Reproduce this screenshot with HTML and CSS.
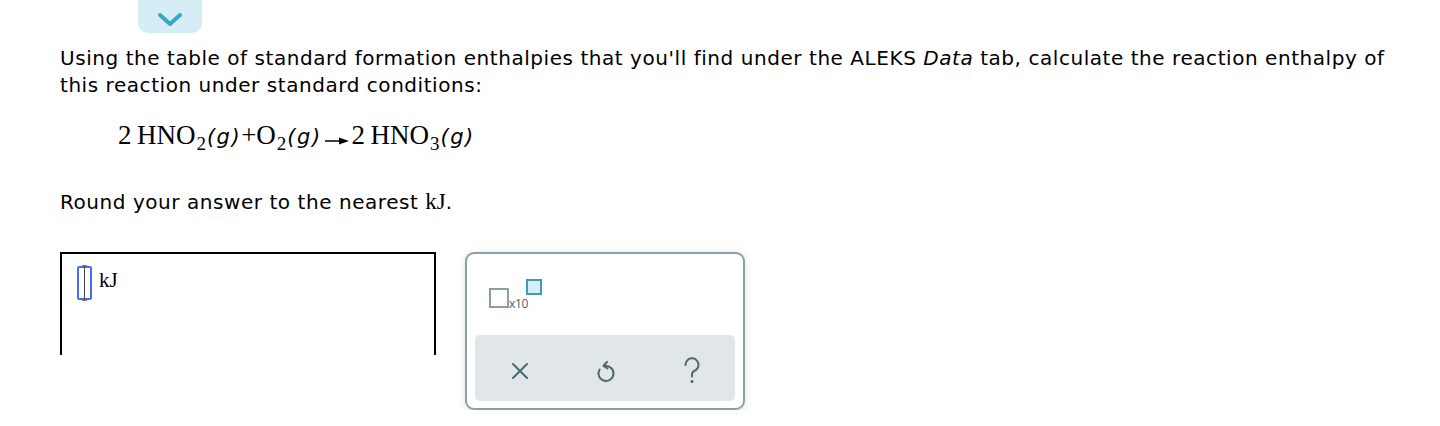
FILE: index.html
```html
<!DOCTYPE html>
<html>
<head>
<meta charset="utf-8">
<link rel="stylesheet" href="styles.css">
</head>
<body>
<div class="tabrow">
  <div class="tab">
    <svg width="26" height="16" viewBox="0 0 26 16"><path d="M3 3 L13 12 L23 3" fill="none" stroke="#3ba6c6" stroke-width="4" stroke-linecap="round" stroke-linejoin="round"/></svg>
  </div>
</div>
<div class="question">
  <p class="prompt">Using the table of standard formation enthalpies that you'll find under the ALEKS <i>Data</i> tab, calculate the reaction enthalpy of this reaction under standard conditions:</p>
  <div class="eq">
    <span class="tm">2&#8201;HNO</span><span class="sb">2</span><span class="ph">(g)</span><span class="tm">+O</span><span class="sb">2</span><span class="ph">(g)</span><svg class="arrow" width="26" height="10" viewBox="0 0 26 10"><path d="M1 5 H18" stroke="#000" stroke-width="1.5"/><path d="M15 1.5 L25 5 L15 8.5 Z" fill="#000"/></svg><span class="tm">2&#8201;HNO</span><span class="sb">3</span><span class="ph">(g)</span>
  </div>
  <p class="round">Round your answer to the nearest <span class="tm2">kJ</span>.</p>
  <div class="work">
    <div class="answer">
      <div class="line">
        <span class="cursor"><span class="bar"></span></span>
        <span class="unit">kJ</span>
      </div>
    </div>
    <div class="tools">
      <div class="palette">
        <span class="sci">
          <span class="base"></span><span class="x10">x10</span><span class="exp"></span>
        </span>
      </div>
      <div class="actions">
        <svg width="18" height="18" viewBox="0 0 18 18"><path d="M2 2 L16 16 M16 2 L2 16" stroke="#4c6873" stroke-width="2" stroke-linecap="round"/></svg>
        <svg width="20" height="24" viewBox="0 0 20 24"><path d="M9 7 A7.5 7.5 0 1 1 3.6 10.5" fill="none" stroke="#4c6873" stroke-width="2" stroke-linecap="round"/><path d="M11 3 L7.5 6.8 L11.5 9.5" fill="none" stroke="#4c6873" stroke-width="2" stroke-linecap="round" stroke-linejoin="round"/></svg>
        <svg width="18" height="28" viewBox="0 0 18 28"><path d="M2.5 8 A6.5 6.5 0 1 1 11 14 Q9 15 9 18 V19.5" fill="none" stroke="#4c6873" stroke-width="2" stroke-linecap="round"/><circle cx="9" cy="24.5" r="1.5" fill="#4c6873"/></svg>
      </div>
    </div>
  </div>
</div>
</body>
</html>
```
FILE: styles.css
```css
html, body {
  margin: 0;
  padding: 0;
  background: #fff;
}
body {
  font-family: "DejaVu Sans", Verdana, sans-serif;
  color: #000;
}
.tabrow {
  padding-left: 138px;
  height: 33px;
}
.tab {
  width: 64px;
  height: 33px;
  background: #d5eef6;
  border-radius: 0 0 10px 10px;
  display: flex;
  align-items: center;
  justify-content: center;
  padding-top: 6px;
  box-sizing: border-box;
}
.question {
  padding: 0 40px 0 60px;
}
.prompt {
  margin: 12px 0 0 0;
  font-size: 20px;
  letter-spacing: 0.55px;
  line-height: 27px;
}
.eq {
  margin: 21px 0 0 58px;
  height: 36px;
  display: flex;
  align-items: baseline;
  font-size: 27px;
}
.tm {
  font-family: "Liberation Serif", "Times New Roman", serif;
}
.sb {
  font-family: "Liberation Serif", serif;
  font-size: 19px;
  position: relative;
  top: 6px;
  margin: 0 1px 0 1px;
}
.ph {
  font-family: "DejaVu Sans", sans-serif;
  font-style: italic;
  font-size: 21px;
  letter-spacing: 1.5px;
}
.arrow {
  margin: 0 2px 0 2px;
  align-self: center;
  position: relative;
  top: 3px;
}
.round {
  margin: 32px 0 0 0;
  font-size: 20px;
  letter-spacing: 0.55px;
  line-height: 27px;
}
.tm2 {
  font-family: "Liberation Serif", serif;
  font-size: 23px;
  letter-spacing: 0;
}
.work {
  margin-top: 36px;
  display: flex;
  align-items: flex-start;
}
.answer {
  width: 372px;
  height: 101px;
  border: 2px solid #000;
  border-bottom: none;
}
.line {
  display: flex;
  align-items: center;
  padding: 12px 0 0 15px;
}
.cursor {
  width: 11px;
  height: 30px;
  border: 2px solid #4a6cf0;
  border-radius: 2px;
  display: flex;
  justify-content: center;
}
.bar {
  width: 5px;
  height: 34px;
  margin-top: -3px;
  border-top: 1px solid #777;
  border-bottom: 1px solid #777;
  background: linear-gradient(#444, #444) center / 1px 100% no-repeat;
}
.unit {
  font-family: "Liberation Serif", serif;
  font-size: 21px;
  margin-left: 7px;
  margin-top: -6px;
}
.tools {
  margin-left: 29px;
  width: 260px;
  height: 147px;
  border: 2px solid #8aa0a8;
  border-radius: 9px;
  box-shadow: 0 2px 8px rgba(0,0,0,0.12);
  padding: 0 8px 7px 8px;
  display: flex;
  flex-direction: column;
}
.palette {
  flex: 1;
  padding: 25px 0 0 14px;
}
.sci {
  display: flex;
  align-items: flex-start;
}
.base {
  width: 16px;
  height: 16px;
  border: 2px solid #8a9ea6;
  margin-top: 9px;
}
.x10 {
  font-family: "Open Sans", sans-serif;
  font-size: 12px;
  color: #4c5e66;
  margin-top: 16px;
  letter-spacing: -0.3px;
}
.exp {
  width: 12px;
  height: 12px;
  border: 2px solid #3d9bb8;
  background: #d5eef6;
  margin-left: -2px;
}
.actions {
  height: 66px;
  background: #e1e6e8;
  border-radius: 5px;
  display: flex;
  align-items: center;
  justify-content: center;
  gap: 67px;
  padding: 6px 0 0 2px;
  box-sizing: border-box;
}
```
